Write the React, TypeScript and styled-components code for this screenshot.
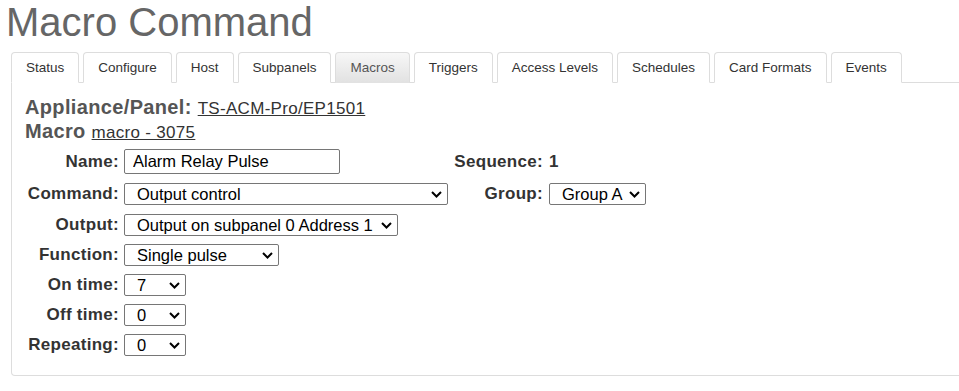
import React from 'react';
import styled, { createGlobalStyle } from 'styled-components';

const GlobalStyle = createGlobalStyle`
	html, body {
		margin: 0;
		padding: 0;
		background: #ffffff;
		overflow: hidden;
	}
	body {
		font-family: "Liberation Sans", Arial, sans-serif;
		color: #333333;
	}
`;

const Page = styled.div`
	display: flex;
	flex-flow: column nowrap;
	width: 990px;
`;

const Title = styled.h1`
	margin: 0 0 8px 0;
	padding-left: 6px;
	font-size: 40px;
	line-height: 44px;
	font-weight: 400;
	color: #666666;
`;

const TabStrip = styled.ul`
	display: flex;
	flex-flow: row nowrap;
	align-items: flex-end;
	gap: 4px;
	list-style: none;
	margin: 0 0 0 11px;
	padding: 0;
	border-bottom: 1px solid #dddddd;
`;

const Tab = styled.li<{ $active?: boolean }>`
	display: flex;
	align-items: center;
	height: 29px;
	padding: 0 14px;
	margin-bottom: -1px;
	border: 1px solid #dddddd;
	border-bottom: 1px solid ${p => (p.$active ? '#e2e2e2' : '#ffffff')};
	border-radius: 4px 4px 0 0;
	font-size: 13.5px;
	color: ${p => (p.$active ? '#555555' : '#333333')};
	background: ${p => (p.$active ? 'linear-gradient(#f7f7f7, #e2e2e2)' : '#ffffff')};
`;

const Panel = styled.div`
	margin-left: 11px;
	padding: 13px 13px 15px 13px;
	border: 1px solid #dddddd;
	border-top: none;
	border-radius: 0 0 4px 4px;
`;

const Heading = styled.div`
	font-size: 20px;
	line-height: 23px;
	font-weight: 700;
	letter-spacing: 0.35px;
	color: #555555;
`;

const HeadingLink = styled.a`
	font-size: 17px;
	font-weight: 400;
	letter-spacing: 0.3px;
	color: #333333;
	text-decoration: underline;
`;

const Form = styled.div`
	display: grid;
	grid-template-columns: 94px 324px 91px auto;
	grid-template-rows: 32px 32px repeat(5, 30px);
	column-gap: 5px;
	margin-top: 1.5px;
	align-items: center;
`;

const Label = styled.label<{ $side?: boolean }>`
	justify-self: end;
	padding-right: ${p => (p.$side ? '1px' : '0')};
	font-size: 17px;
	font-weight: 700;
	letter-spacing: 0.3px;
	color: #333333;
	white-space: nowrap;
`;

const Value = styled.span`
	justify-self: start;
	font-size: 17px;
	font-weight: 700;
	color: #333333;
`;

const TextInput = styled.input`
	box-sizing: border-box;
	width: 216px;
	height: 25px;
	padding: 0 0 0 8px;
	border: 1px solid #767676;
	border-radius: 2px;
	font-family: "Liberation Sans", Arial, sans-serif;
	font-size: 16.5px;
	color: #000000;
	outline: none;
`;

const SelectWrap = styled.span<{ $width: number }>`
	position: relative;
	display: inline-flex;
	width: ${p => p.$width}px;
	justify-self: start;

	& > svg {
		position: absolute;
		right: 6px;
		top: 8px;
		pointer-events: none;
	}
`;

const NativeSelect = styled.select`
	appearance: none;
	box-sizing: border-box;
	width: 100%;
	height: 22px;
	padding: 0 22px 0 12px;
	border: 1px solid #767676;
	border-radius: 2px;
	background: #ffffff;
	font-family: "Liberation Sans", Arial, sans-serif;
	font-size: 16.5px;
	line-height: 20px;
	color: #000000;
	outline: none;
`;

const Chevron = () => (
	<svg width="11" height="7" viewBox="0 0 11 7">
		<path d="M1 1 L5.5 5.5 L10 1" fill="none" stroke="#000" strokeWidth="2" />
	</svg>
);

const Select: React.FC<{ width: number; value: string }> = ({ width, value }) => (
	<SelectWrap $width={width}>
		<NativeSelect defaultValue={value}>
			<option>{value}</option>
		</NativeSelect>
		<Chevron />
	</SelectWrap>
);

const tabs = ['Status', 'Configure', 'Host', 'Subpanels', 'Macros', 'Triggers', 'Access Levels', 'Schedules', 'Card Formats', 'Events'];

const Empty = styled.span``;

export default function App() {
	return (
		<Page>
			<GlobalStyle />
			<Title>Macro Command</Title>
			<TabStrip>
				{tabs.map(t => (
					<Tab key={t} $active={t === 'Macros'}>{t}</Tab>
				))}
			</TabStrip>
			<Panel>
				<Heading>
					Appliance/Panel: <HeadingLink href="#">TS-ACM-Pro/EP1501</HeadingLink>
				</Heading>
				<Heading>
					Macro <HeadingLink href="#">macro - 3075</HeadingLink>
				</Heading>
				<Form>
					<Label>Name:</Label>
					<TextInput defaultValue="Alarm Relay Pulse" />
					<Label $side>Sequence:</Label>
					<Value>1</Value>

					<Label>Command:</Label>
					<Select width={324} value="Output control" />
					<Label $side>Group:</Label>
					<Select width={97} value="Group A" />

					<Label>Output:</Label>
					<Select width={274} value="Output on subpanel 0 Address 1" />
					<Empty />
					<Empty />

					<Label>Function:</Label>
					<Select width={155} value="Single pulse" />
					<Empty />
					<Empty />

					<Label>On time:</Label>
					<Select width={62} value="7" />
					<Empty />
					<Empty />

					<Label>Off time:</Label>
					<Select width={62} value="0" />
					<Empty />
					<Empty />

					<Label>Repeating:</Label>
					<Select width={62} value="0" />
					<Empty />
					<Empty />
				</Form>
			</Panel>
		</Page>
	);
}
